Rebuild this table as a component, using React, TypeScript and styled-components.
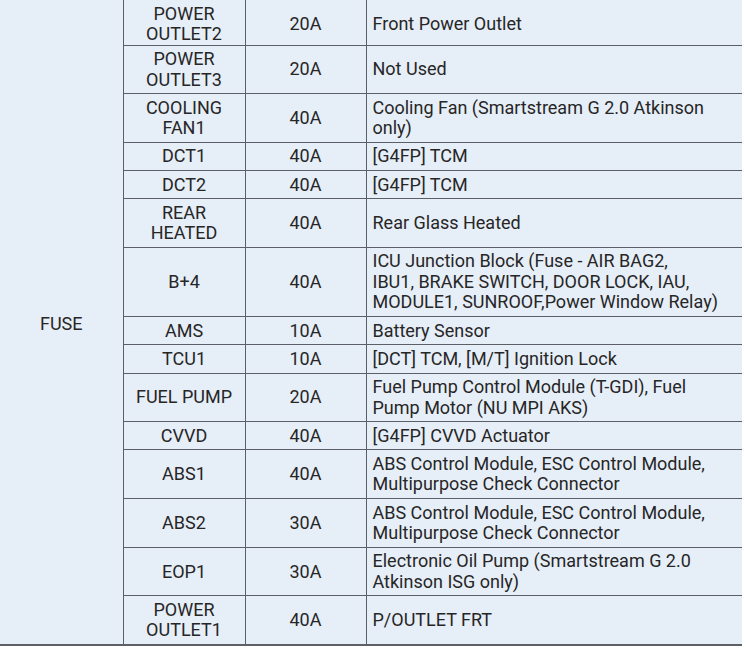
import React from "react";
import styled, { createGlobalStyle } from "styled-components";

const GlobalStyle = createGlobalStyle`
  html, body {
    margin: 0;
    padding: 0;
    background: #ffffff;
  }
  body {
    font-family: Roboto, "Liberation Sans", Arial, sans-serif;
    overflow: hidden;
  }
`;

const Sheet = styled.div`
  width: 742px;
  height: 648px;
  overflow: hidden;
`;

const Table = styled.table`
  width: 742px;
  border-collapse: collapse;
  table-layout: fixed;
  background: #e6eef8;
  color: #262626;
  font-size: 18px;
  line-height: 20.5px;
  border-bottom: 2px solid #5c6066;

  td {
    border: 1px solid #5c6066;
    padding: 3.5px 6px 3.2px;
    vertical-align: middle;
    background: #e6eef8;
  }

  tr:first-child td {
    border-top: none;
    padding-top: 3.5px;
    padding-bottom: 0;
  }

  td:first-child {
    border-left: none;
  }

  td:last-child {
    border-right: none;
  }
`;

const Col = styled.col<{ $w?: number }>`
  width: ${(p) => (p.$w ? `${p.$w}px` : "auto")};
`;

const CenterCell = styled.td`
  text-align: center;
  white-space: pre-line;
`;

const DescCell = styled.td`
  text-align: left;
  white-space: pre-line;
`;

type Fuse = {
  name: string;
  amp: string;
  desc: string;
};

const FUSES: Fuse[] = [
  { name: "POWER\nOUTLET2", amp: "20A", desc: "Front Power Outlet" },
  { name: "POWER\nOUTLET3", amp: "20A", desc: "Not Used" },
  {
    name: "COOLING\nFAN1",
    amp: "40A",
    desc: "Cooling Fan (Smartstream G 2.0 Atkinson\nonly)",
  },
  { name: "DCT1", amp: "40A", desc: "[G4FP] TCM" },
  { name: "DCT2", amp: "40A", desc: "[G4FP] TCM" },
  { name: "REAR\nHEATED", amp: "40A", desc: "Rear Glass Heated" },
  {
    name: "B+4",
    amp: "40A",
    desc: "ICU Junction Block (Fuse - AIR BAG2,\nIBU1, BRAKE SWITCH, DOOR LOCK, IAU,\nMODULE1, SUNROOF,Power Window Relay)",
  },
  { name: "AMS", amp: "10A", desc: "Battery Sensor" },
  { name: "TCU1", amp: "10A", desc: "[DCT] TCM, [M/T] Ignition Lock" },
  {
    name: "FUEL PUMP",
    amp: "20A",
    desc: "Fuel Pump Control Module (T-GDI), Fuel\nPump Motor (NU MPI AKS)",
  },
  { name: "CVVD", amp: "40A", desc: "[G4FP] CVVD Actuator" },
  {
    name: "ABS1",
    amp: "40A",
    desc: "ABS Control Module, ESC Control Module,\nMultipurpose Check Connector",
  },
  {
    name: "ABS2",
    amp: "30A",
    desc: "ABS Control Module, ESC Control Module,\nMultipurpose Check Connector",
  },
  {
    name: "EOP1",
    amp: "30A",
    desc: "Electronic Oil Pump (Smartstream G 2.0\nAtkinson ISG only)",
  },
  { name: "POWER\nOUTLET1", amp: "40A", desc: "P/OUTLET FRT" },
];

const App: React.FC = () => {
  return (
    <>
      <GlobalStyle />
      <Sheet>
        <Table>
          <colgroup>
            <Col $w={123} />
            <Col $w={122} />
            <Col $w={121} />
            <Col />
          </colgroup>
          <tbody>
            {FUSES.map((fuse, i) => (
              <tr key={i}>
                {i === 0 && (
                  <CenterCell rowSpan={FUSES.length}>FUSE</CenterCell>
                )}
                <CenterCell>{fuse.name}</CenterCell>
                <CenterCell>{fuse.amp}</CenterCell>
                <DescCell>{fuse.desc}</DescCell>
              </tr>
            ))}
          </tbody>
        </Table>
      </Sheet>
    </>
  );
};

export default App;
